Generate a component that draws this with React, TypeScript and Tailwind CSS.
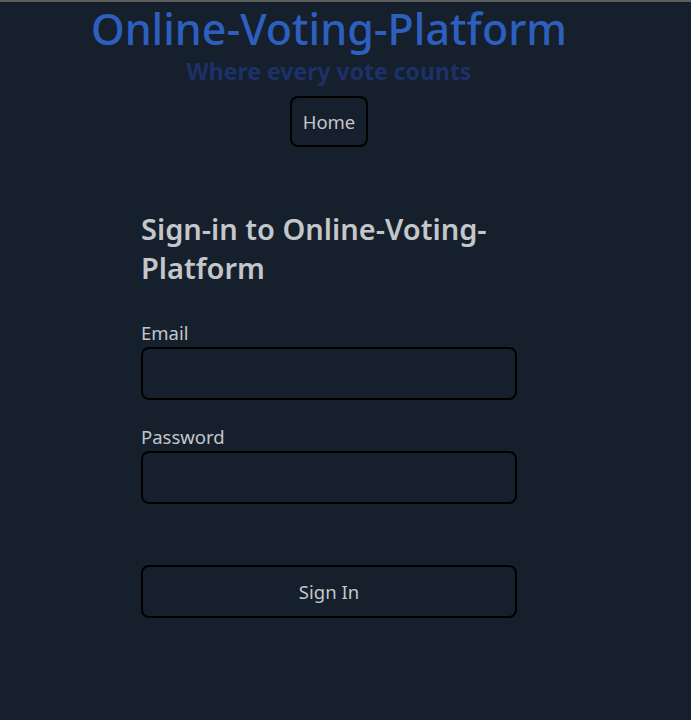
export default function App() {
  return (
    <div className="min-h-[720px] border-t-2 border-[#5c5c5c] bg-[#161f2c] font-['Noto_Sans','Open_Sans',sans-serif] text-[#c3c6ca]">
      <div className="w-[658px]">
        {/* Header */}
        <header className="flex flex-col items-center">
          <h1 className="text-[43px] leading-[54px] font-medium text-[#2d5fbf]">
            Online-Voting-Platform
          </h1>
          <h2 className="text-[23px] leading-[30px] font-bold text-[#1c3169]">
            Where every vote counts
          </h2>
          <nav className="mt-[10px]">
            <a
              href="#"
              className="flex h-[51px] items-center rounded-lg border-2 border-black px-[11px] text-[18.5px]"
            >
              Home
            </a>
          </nav>
        </header>

        {/* Form */}
        <main className="mx-auto mt-[62px] w-[376px]">
          <h3 className="text-[29px] leading-[39px] font-semibold">
            Sign-in to Online-Voting-Platform
          </h3>
          <form className="mt-[33px] flex flex-col">
            <label className="text-[18.5px] leading-[25px]">Email</label>
            <input
              type="email"
              className="mt-[2px] h-[53px] rounded-lg border-2 border-black bg-transparent px-3"
            />
            <label className="mt-[24px] text-[18.5px] leading-[25px]">Password</label>
            <input
              type="password"
              className="mt-[2px] h-[53px] rounded-lg border-2 border-black bg-transparent px-3"
            />
            <button
              type="submit"
              className="mt-[61px] h-[53px] rounded-lg border-2 border-black text-[18.5px]"
            >
              Sign In
            </button>
          </form>
        </main>
      </div>
    </div>
  );
}
